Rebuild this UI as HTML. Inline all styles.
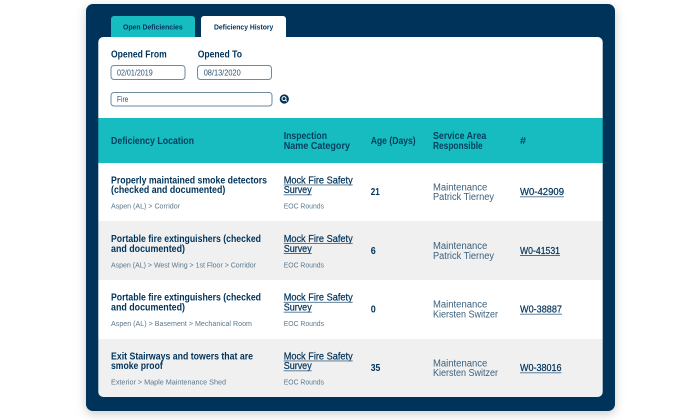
<!DOCTYPE html>
<html>
<head>
<meta charset="utf-8">
<style>
html,body{margin:0;padding:0;background:#fff;width:700px;height:420px;overflow:hidden}
svg{display:block}
text{font-family:"Liberation Sans",sans-serif;fill:#00335a;filter:blur(.2px)}
.tab{font-size:7.2px;font-weight:700}
.lab{font-size:9.8px;font-weight:700}
.inp{font-size:7.8px;fill:#2a5272}
.th{font-size:9.8px;font-weight:700;fill:#04405f}
.t{font-size:10px;font-weight:700}
.s{font-size:7.7px;fill:#5a788e}
.l{font-size:10px;stroke:#00335a;stroke-width:.22}
.a{font-size:10px;font-weight:700}
.m{font-size:9.8px;fill:#3a5f7c}
.u{stroke:#4a6e8a;stroke-width:.9}
.box{fill:#fff;stroke:#6c8aa0;stroke-width:1}
</style>
</head>
<body>
<svg width="700" height="420" viewBox="0 0 700 420" xmlns="http://www.w3.org/2000/svg">
<rect x="86" y="4" width="529" height="407" rx="7" fill="#00335a" style="filter:drop-shadow(0 3px 5px rgba(0,0,0,.2))"/>
<path d="M111 37V19a3 3 0 0 1 3-3h78a3 3 0 0 1 3 3v18z" fill="#17bcc0"/>
<path d="M201 37V19a3 3 0 0 1 3-3h79a3 3 0 0 1 3 3v18z" fill="#fff"/>
<text class="tab" x="123" y="29.5" textLength="59.7" lengthAdjust="spacingAndGlyphs">Open Deficiencies</text>
<text class="tab" x="214" y="29.5" textLength="59.3" lengthAdjust="spacingAndGlyphs">Deficiency History</text>

<path d="M98.3 118V42a5 5 0 0 1 5-5H597.7a5 5 0 0 1 5 5V118z" fill="#fff"/>
<rect x="98.3" y="118" width="504.4" height="45" fill="#17bcc0"/>
<rect x="98.3" y="163" width="504.4" height="58" fill="#fff"/>
<rect x="98.3" y="221" width="504.4" height="59" fill="#f0f0f0"/>
<rect x="98.3" y="280" width="504.4" height="59" fill="#fff"/>
<path d="M98.3 339H602.7V392a5 5 0 0 1-5 5H103.3a5 5 0 0 1-5-5z" fill="#f0f0f0"/>

<text class="lab" x="111" y="57.5" textLength="55.7" lengthAdjust="spacingAndGlyphs">Opened From</text>
<text class="lab" x="197.7" y="57.5" textLength="44.3" lengthAdjust="spacingAndGlyphs">Opened To</text>
<rect class="box" x="111" y="65.5" width="74" height="14" rx="3"/>
<rect class="box" x="197.5" y="65.5" width="74" height="14" rx="3"/>
<rect class="box" x="111" y="92.5" width="161" height="13.5" rx="3"/>
<text class="inp" x="117" y="75.7" textLength="35.7" lengthAdjust="spacingAndGlyphs">02/01/2019</text>
<text class="inp" x="203.7" y="75.7" textLength="37" lengthAdjust="spacingAndGlyphs">08/13/2020</text>
<text class="inp" x="117" y="101.8" textLength="11.3" lengthAdjust="spacingAndGlyphs">Fire</text>
<circle cx="284.3" cy="99" r="4.6" fill="#00335a"/>
<circle cx="284" cy="98.6" r="2" fill="none" stroke="#fff" stroke-width="1"/>
<path d="M285.4 100l1.4 1.4" stroke="#fff" stroke-width="1"/>

<text class="th" x="111" y="143.8" textLength="83" lengthAdjust="spacingAndGlyphs">Deficiency Location</text>
<text class="th" x="283.7" y="138.8" textLength="43.3" lengthAdjust="spacingAndGlyphs">Inspection</text>
<text class="th" x="283.7" y="148.8" textLength="66.3" lengthAdjust="spacingAndGlyphs">Name Category</text>
<text class="th" x="370.7" y="143.8" textLength="45" lengthAdjust="spacingAndGlyphs">Age (Days)</text>
<text class="th" x="433" y="138.8" textLength="53.3" lengthAdjust="spacingAndGlyphs">Service Area</text>
<text class="th" x="433" y="148.8" textLength="49.7" lengthAdjust="spacingAndGlyphs">Responsible</text>
<text class="th" x="520" y="143.8" textLength="6" lengthAdjust="spacingAndGlyphs">#</text>

<!-- Row 1 -->
<text class="t" x="111" y="183.3" textLength="156" lengthAdjust="spacingAndGlyphs">Properly maintained smoke detectors</text>
<text class="t" x="111" y="193.2" textLength="114.3" lengthAdjust="spacingAndGlyphs">(checked and documented)</text>
<text class="s" x="111" y="208.7" textLength="69" lengthAdjust="spacingAndGlyphs">Aspen (AL) &gt; Corridor</text>
<text class="l" x="283.7" y="183.3" textLength="69" lengthAdjust="spacingAndGlyphs">Mock Fire Safety</text>
<line class="u" x1="283.7" x2="352.7" y1="184.9" y2="184.9"/>
<text class="l" x="283.7" y="193.2" textLength="28" lengthAdjust="spacingAndGlyphs">Survey</text>
<line class="u" x1="283.7" x2="311.7" y1="194.8" y2="194.8"/>
<text class="s" x="283.7" y="208.7" textLength="40.3" lengthAdjust="spacingAndGlyphs">EOC Rounds</text>
<text class="a" x="370.7" y="195.2" textLength="9" lengthAdjust="spacingAndGlyphs">21</text>
<text class="m" x="433" y="190.3" textLength="54.3" lengthAdjust="spacingAndGlyphs">Maintenance</text>
<text class="m" x="433" y="200.2" textLength="61" lengthAdjust="spacingAndGlyphs">Patrick Tierney</text>
<text class="l" x="520" y="195.2" textLength="44" lengthAdjust="spacingAndGlyphs">W0-42909</text>
<line class="u" x1="520" x2="564" y1="196.8" y2="196.8"/>

<!-- Row 2 -->
<text class="t" x="111" y="242" textLength="150" lengthAdjust="spacingAndGlyphs">Portable fire extinguishers (checked</text>
<text class="t" x="111" y="251.9" textLength="74" lengthAdjust="spacingAndGlyphs">and documented)</text>
<text class="s" x="111" y="267.4" textLength="145" lengthAdjust="spacingAndGlyphs">Aspen (AL) &gt; West Wing &gt; 1st Floor &gt; Corridor</text>
<text class="l" x="283.7" y="242" textLength="69" lengthAdjust="spacingAndGlyphs">Mock Fire Safety</text>
<line class="u" x1="283.7" x2="352.7" y1="243.6" y2="243.6"/>
<text class="l" x="283.7" y="251.9" textLength="28" lengthAdjust="spacingAndGlyphs">Survey</text>
<line class="u" x1="283.7" x2="311.7" y1="253.5" y2="253.5"/>
<text class="s" x="283.7" y="267.4" textLength="40.3" lengthAdjust="spacingAndGlyphs">EOC Rounds</text>
<text class="a" x="370.7" y="253.9" textLength="5" lengthAdjust="spacingAndGlyphs">6</text>
<text class="m" x="433" y="249" textLength="54.3" lengthAdjust="spacingAndGlyphs">Maintenance</text>
<text class="m" x="433" y="258.9" textLength="61" lengthAdjust="spacingAndGlyphs">Patrick Tierney</text>
<text class="l" x="520" y="253.9" textLength="40" lengthAdjust="spacingAndGlyphs">W0-41531</text>
<line class="u" x1="520" x2="560" y1="255.5" y2="255.5"/>

<!-- Row 3 -->
<text class="t" x="111" y="300.7" textLength="150" lengthAdjust="spacingAndGlyphs">Portable fire extinguishers (checked</text>
<text class="t" x="111" y="310.6" textLength="74" lengthAdjust="spacingAndGlyphs">and documented)</text>
<text class="s" x="111" y="326.1" textLength="141" lengthAdjust="spacingAndGlyphs">Aspen (AL) &gt; Basement &gt; Mechanical Room</text>
<text class="l" x="283.7" y="300.7" textLength="69" lengthAdjust="spacingAndGlyphs">Mock Fire Safety</text>
<line class="u" x1="283.7" x2="352.7" y1="302.3" y2="302.3"/>
<text class="l" x="283.7" y="310.6" textLength="28" lengthAdjust="spacingAndGlyphs">Survey</text>
<line class="u" x1="283.7" x2="311.7" y1="312.2" y2="312.2"/>
<text class="s" x="283.7" y="326.1" textLength="40.3" lengthAdjust="spacingAndGlyphs">EOC Rounds</text>
<text class="a" x="370.7" y="312.6" textLength="5" lengthAdjust="spacingAndGlyphs">0</text>
<text class="m" x="433" y="307.7" textLength="54.3" lengthAdjust="spacingAndGlyphs">Maintenance</text>
<text class="m" x="433" y="317.6" textLength="65" lengthAdjust="spacingAndGlyphs">Kiersten Switzer</text>
<text class="l" x="520" y="312.6" textLength="42" lengthAdjust="spacingAndGlyphs">W0-38887</text>
<line class="u" x1="520" x2="562" y1="314.2" y2="314.2"/>

<!-- Row 4 -->
<text class="t" x="111" y="359.3" textLength="142" lengthAdjust="spacingAndGlyphs">Exit Stairways and towers that are</text>
<text class="t" x="111" y="369.2" textLength="51.7" lengthAdjust="spacingAndGlyphs">smoke proof</text>
<text class="s" x="111" y="384.7" textLength="115" lengthAdjust="spacingAndGlyphs">Exterior &gt; Maple Maintenance Shed</text>
<text class="l" x="283.7" y="359.3" textLength="69" lengthAdjust="spacingAndGlyphs">Mock Fire Safety</text>
<line class="u" x1="283.7" x2="352.7" y1="360.9" y2="360.9"/>
<text class="l" x="283.7" y="369.2" textLength="28" lengthAdjust="spacingAndGlyphs">Survey</text>
<line class="u" x1="283.7" x2="311.7" y1="370.8" y2="370.8"/>
<text class="s" x="283.7" y="384.7" textLength="40.3" lengthAdjust="spacingAndGlyphs">EOC Rounds</text>
<text class="a" x="370.7" y="371.2" textLength="9.6" lengthAdjust="spacingAndGlyphs">35</text>
<text class="m" x="433" y="366.3" textLength="54.3" lengthAdjust="spacingAndGlyphs">Maintenance</text>
<text class="m" x="433" y="376.2" textLength="65" lengthAdjust="spacingAndGlyphs">Kiersten Switzer</text>
<text class="l" x="520" y="371.2" textLength="41.5" lengthAdjust="spacingAndGlyphs">W0-38016</text>
<line class="u" x1="520" x2="561.5" y1="372.8" y2="372.8"/>
</svg>
</body>
</html>
